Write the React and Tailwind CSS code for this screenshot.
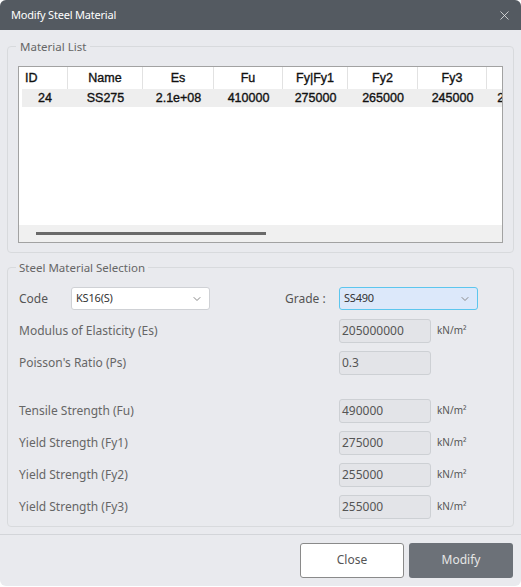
import { ChevronDown, X } from 'lucide-react';

const columns = [
  { key: 'id', label: 'ID', w: 'w-[49px]', align: 'justify-start pl-[6px]' },
  { key: 'name', label: 'Name', w: 'w-[75px]' },
  { key: 'es', label: 'Es', w: 'w-[71px]' },
  { key: 'fu', label: 'Fu', w: 'w-[69px]' },
  { key: 'fy1', label: 'Fy|Fy1', w: 'w-[65px]' },
  { key: 'fy2', label: 'Fy2', w: 'w-[70px]' },
  { key: 'fy3', label: 'Fy3', w: 'w-[69px]' },
  { key: 'fy4', label: '', w: 'w-[62px]' },
];

const row = { id: '24', name: 'SS275', es: '2.1e+08', fu: '410000', fy1: '275000', fy2: '265000', fy3: '245000', fy4: '235000' };

const fields = [
  { label: 'Modulus of Elasticity (Es)', value: '205000000', unit: true },
  { label: "Poisson's Ratio (Ps)", value: '0.3', unit: false },
  { label: 'Tensile Strength (Fu)', value: '490000', unit: true, gap: true },
  { label: 'Yield Strength (Fy1)', value: '275000', unit: true },
  { label: 'Yield Strength (Fy2)', value: '255000', unit: true },
  { label: 'Yield Strength (Fy3)', value: '255000', unit: true },
];

function Select({ value, active }) {
  return (
    <div
      className={
        'w-[139px] h-[23px] rounded-[3px] border flex items-center justify-between pl-[4px] pr-[6px] ' +
        (active ? 'bg-[#dce8fa] border-[#5cc6ee]' : 'bg-white border-[#cfd1d5]')
      }
    >
      <span className="text-[11px] text-[#333] tracking-[-0.2px]">{value}</span>
      <ChevronDown className="w-[12px] h-[12px] text-[#888]" strokeWidth={2} />
    </div>
  );
}

export default function App() {
  return (
    <div className="w-[521px] h-[587px] bg-white" style={{ fontFamily: '"Noto Sans", "Liberation Sans", sans-serif' }}>
      <div className="h-[586px] rounded-[6px] overflow-hidden bg-[#e9eaee] flex flex-col">
        {/* Title bar */}
        <div className="h-[30px] bg-[#545a61] flex items-center justify-between pl-[11px] pr-[9px] shrink-0">
          <span className="text-[11px] tracking-[-0.2px] text-white">Modify Steel Material</span>
          <X className="w-[15px] h-[15px] text-[#e4e4e4]" strokeWidth={1.3} />
        </div>

        {/* Material list */}
        <fieldset className="min-w-0 mx-[7px] mt-[8px] border border-[#d8dadd] rounded-[4px] px-[10px] pb-[9px] pt-[11px]">
          <legend className="-ml-[2px] px-[4px] text-[11.5px] text-[#666]">Material List</legend>
          <div className="h-[177px] border border-[#a2a2a2] bg-white flex flex-col overflow-hidden" style={{ fontFamily: '"Liberation Sans", Arial, sans-serif' }}>
            <div className="h-[22px] flex shrink-0">
              {columns.map((c) => (
                <div
                  key={c.key}
                  className={'h-full shrink-0 flex items-center border-r border-[#e2e2e2] text-[12.5px] text-[#111] [-webkit-text-stroke:0.35px_#111] ' + c.w + ' ' + (c.align || 'justify-center')}
                >
                  {c.label}
                </div>
              ))}
            </div>
            <div className="h-[18px] ml-[3px] bg-[#eeeeee] flex shrink-0">
              {columns.map((c, i) => (
                <div
                  key={c.key}
                  className={'h-full shrink-0 flex items-center justify-center text-[12.5px] text-[#111] [-webkit-text-stroke:0.35px_#111] ' + (i === 0 ? 'w-[46px]' : c.w)}
                >
                  {row[c.key]}
                </div>
              ))}
            </div>
            <div className="flex-1" />
            <div className="h-[17px] bg-[#f0f0f0] flex items-center pl-[17px] shrink-0">
              <div className="w-[230px] h-[3px] bg-[#6a6a6a]" />
            </div>
          </div>
        </fieldset>

        {/* Steel material selection */}
        <fieldset className="min-w-0 mx-[7px] mt-[6px] border border-[#d8dadd] rounded-[4px] pl-[11px] pr-[10px] pb-[7px] pt-[10px]">
          <legend className="-ml-[3px] px-[3px] text-[11.5px] text-[#666]">Steel Material Selection</legend>
          <div className="flex items-center h-[24px] text-[12px] text-[#555]">
            <span className="w-[52px]">Code</span>
            <Select value="KS16(S)" />
            <span className="ml-[75px] w-[54px]">Grade :</span>
            <Select value="SS490" active />
          </div>
          {fields.map((f) => (
            <div key={f.label} className={'flex items-center h-[24px] text-[12px] text-[#666] ' + (f.gap ? 'mt-[24px]' : 'mt-[8px]')}>
              <span className="w-[320px]">{f.label}</span>
              <div className="w-[92px] h-[24px] rounded-[3px] border border-[#cdd0d4] bg-[#e3e4e8] flex items-center pl-[2px] text-[12px] text-[#555]">
                {f.value}
              </div>
              {f.unit && <span className="ml-[6px] text-[10px] text-[#555]">kN/m²</span>}
            </div>
          ))}
        </fieldset>

        {/* Footer */}
        <div className="mt-[7px] border-t border-[#d3d5d9] flex justify-end gap-[5px] pt-[8px] pr-[8px]">
          <button className="w-[104px] h-[35px] rounded-[3px] border border-[#8a8a8a] bg-white text-[12px] text-[#555]">Close</button>
          <button className="w-[104px] h-[35px] rounded-[3px] bg-[#6c7178] text-[12px] text-[#e6e6e6]">Modify</button>
        </div>
      </div>
    </div>
  );
}
